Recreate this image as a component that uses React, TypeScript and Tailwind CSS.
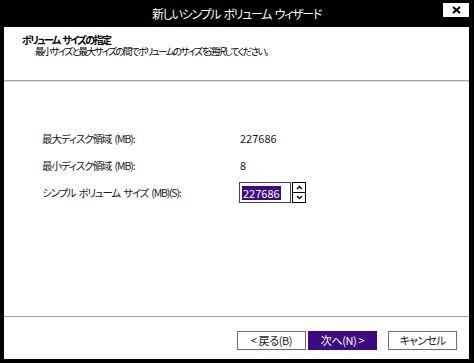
import React from "react";

const font = "font-['Meiryo_UI','Noto_Sans_CJK_JP',sans-serif] [font-feature-settings:'palt']";

const rows = [
  { label: "最大ディスク領域 (MB):", value: "227686" },
  { label: "最小ディスク領域 (MB):", value: "8" },
];

function Spinner() {
  return (
    <div className="flex flex-col w-[14px] h-[21px] border border-black bg-white">
      <div className="flex-1 flex items-center justify-center border-b border-black">
        <svg width="7" height="5" viewBox="0 0 7 5">
          <path d="M1 4 L3.5 1.5 L6 4" stroke="black" strokeWidth="1.4" fill="none" />
        </svg>
      </div>
      <div className="flex-1 flex items-center justify-center">
        <svg width="7" height="5" viewBox="0 0 7 5">
          <path d="M1 1 L3.5 3.5 L6 1" stroke="black" strokeWidth="1.4" fill="none" />
        </svg>
      </div>
    </div>
  );
}

export default function App() {
  return (
    <div className={`w-[474px] h-[363px] bg-black flex flex-col ${font}`}>
      {/* title bar */}
      <div className="h-[27px] shrink-0 flex items-start">
        <div className="flex-1 pl-[30px] pt-[6px] text-center text-white text-[12px] leading-[16px] tracking-[-1.3px] [word-spacing:2px]">
          新しいシンプル ボリューム ウィザード
        </div>
        <div className="w-[26px] h-[14px] mt-[3px] mr-[5px] bg-white flex items-center justify-center">
          <svg width="9" height="8" viewBox="0 0 9 8">
            <path d="M1 1 L8 7 M8 1 L1 7" stroke="black" strokeWidth="2" />
          </svg>
        </div>
      </div>

      <div className="flex-1 ml-[4px] mr-[5px] mb-[4px] bg-white flex flex-col">
        {/* header */}
        <div className="h-[53px] shrink-0 pl-[18px] pt-[7px] text-[10px] text-black flex flex-col gap-[1px]">
          <div className="font-bold leading-[11px] tracking-[-1.6px] [word-spacing:2px]">ボリューム サイズの指定</div>
          <div className="pl-[13px] text-[9.5px] leading-[11px] tracking-[-1.6px]">最小サイズと最大サイズの間でボリュームのサイズを選択してください。</div>
        </div>
        <div className="h-[2px] bg-[#a8a8a8] border-b border-[#dcdcdc]" />

        {/* body */}
        <div className="flex-1 flex flex-col pt-[50px] pl-[38px] gap-[14px] text-[11px] leading-[13px] text-[#1a1a1a]">
          {rows.map((r) => (
            <div key={r.label} className="flex">
              <span className="w-[198px] text-[10.5px] tracking-[-1.1px] [word-spacing:2px]">{r.label}</span>
              <span>{r.value}</span>
            </div>
          ))}
          <div className="flex items-center mt-[-4px]">
            <span className="w-[197px] text-[10.5px] tracking-[-1.2px] [word-spacing:2px]">シンプル ボリューム サイズ (MB)(S):</span>
            <div className="flex items-center">
              <div className="w-[52px] h-[21px] border border-[#3b3b8f] flex items-center pl-[2px]">
                <span className="bg-[#3c0a83] text-white px-[1px] leading-[14px]">227686</span>
              </div>
              <div className="ml-[1px]">
                <Spinner />
              </div>
            </div>
          </div>
        </div>

        {/* footer */}
        <div className="h-[1px] bg-[#a0a0a0]" />
        <div className="h-[42px] shrink-0 flex justify-end items-start pt-[14px] pr-[12px] text-[11px] leading-[13px] tracking-[-0.4px]">
          <button className="w-[69px] h-[19px] border border-[#6e6e6e] bg-white text-[#1a1a1a] flex items-center justify-center">
            &lt; 戻る(B)
          </button>
          <button className="w-[69px] h-[19px] ml-[2px] bg-[#3c0a83] text-white flex items-center justify-center">
            次へ(N) &gt;
          </button>
          <button className="w-[69px] h-[19px] ml-[11px] border border-[#6e6e6e] bg-white text-[#1a1a1a] flex items-center justify-center tracking-[-0.8px]">
            キャンセル
          </button>
        </div>
      </div>
    </div>
  );
}
